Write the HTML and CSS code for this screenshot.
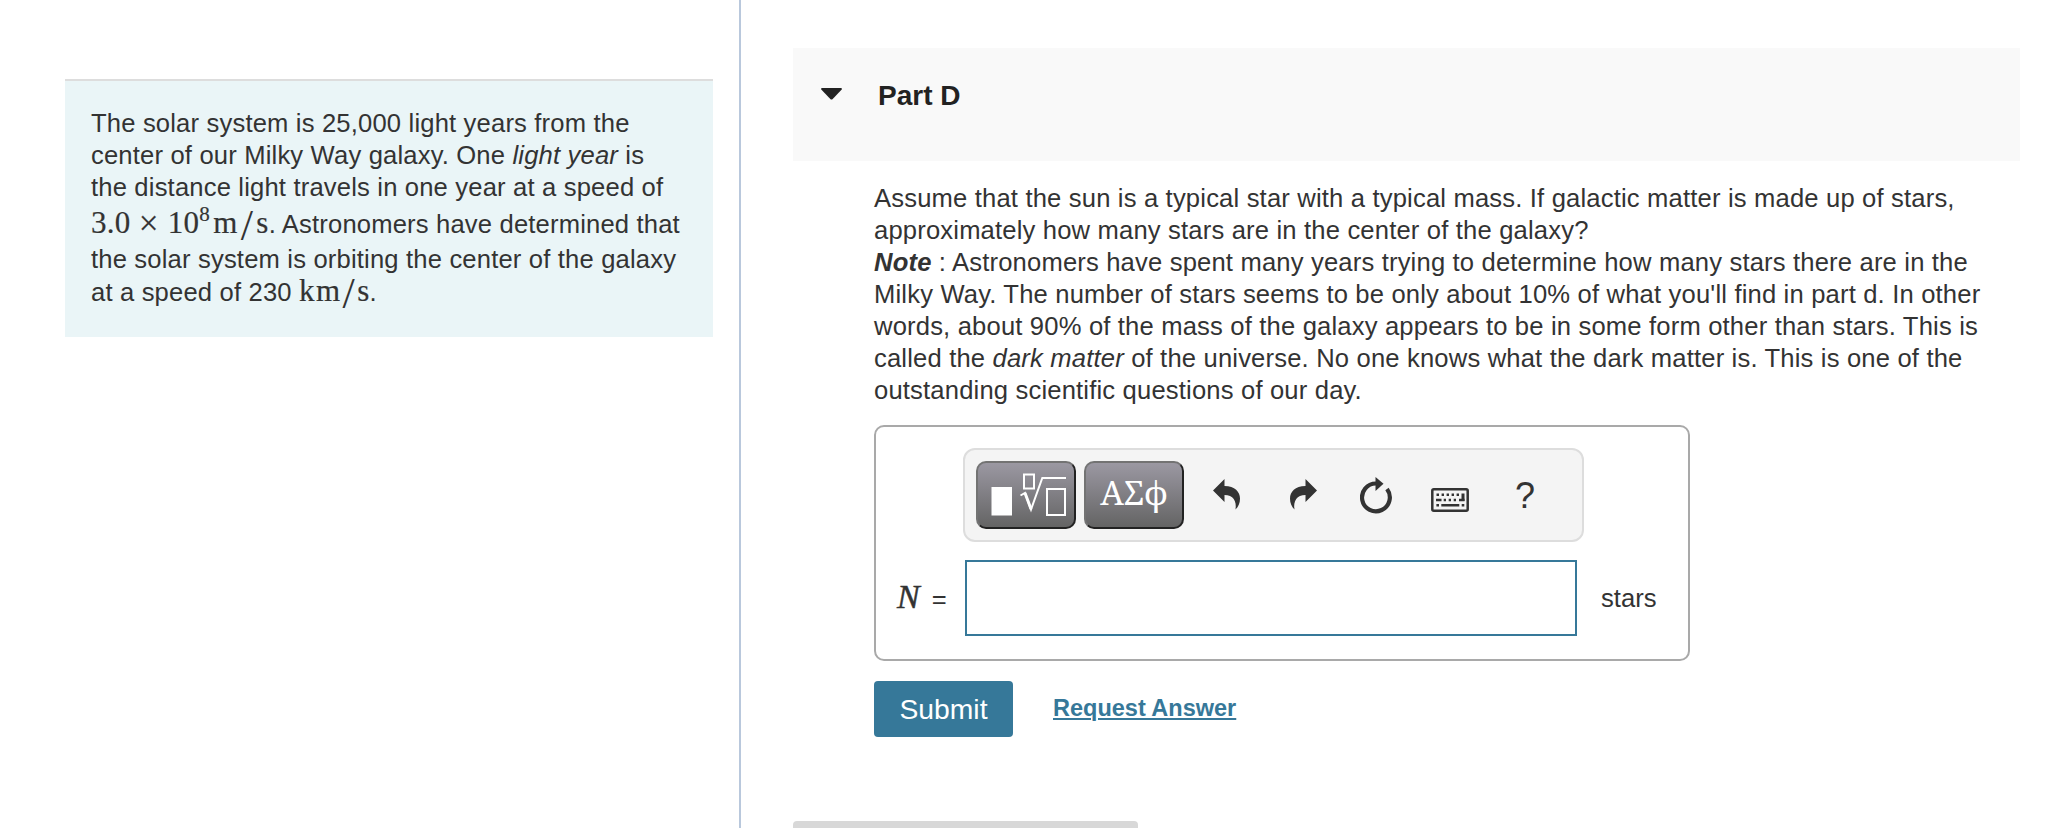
FILE: index.html
```
<!DOCTYPE html>
<html lang="en">
<head>
    <meta charset="UTF-8">
    <meta name="viewport" content="width=device-width, initial-scale=1.0">
    <title>Part D</title>
    <link rel="stylesheet" href="styles.css">
</head>
<body>

<!-- Left column: problem introduction -->
<aside class="intro-column">
    <div class="intro">
        <span class="line">The solar system is 25,000 light years from the</span>
        <span class="line">center of our Milky Way galaxy. One <em>light year</em> is</span>
        <span class="line">the distance light travels in one year at a speed of</span>
        <span class="line line-power"><span class="math">3.0<span class="times">×</span>10<span class="sup">8</span><span class="wide">m</span><span class="slash">/</span>s</span>. Astronomers have determined that</span>
        <span class="line line-after">the solar system is orbiting the center of the galaxy</span>
        <span class="line">at a speed of 230 <span class="math"><span class="wide">km</span><span class="slash">/</span>s</span>.</span>
    </div>
</aside>

<!-- Right column: the question -->
<main class="question-column">
    <header class="part-header">
        <svg class="caret" width="21" height="12" viewBox="0 0 21 12">
            <path d="M1 0h19q1.500 .5.5 1.800L11.700 11q-1.200 1-2.400 0L.5 1.800Q-.5.5 1 0z" fill="#222"/>
        </svg>
        <h1>Part D</h1>
    </header>

    <section class="part-body">
        <div class="question">
            <span class="line">Assume that the sun is a typical star with a typical mass. If galactic matter is made up of stars,</span>
            <span class="line">approximately how many stars are in the center of the galaxy?</span>
            <span class="line"><strong><em>Note</em></strong> : Astronomers have spent many years trying to determine how many stars there are in the</span>
            <span class="line">Milky Way. The number of stars seems to be only about 10% of what you'll find in part d. In other</span>
            <span class="line">words, about 90% of the mass of the galaxy appears to be in some form other than stars. This is</span>
            <span class="line">called the <em>dark matter</em> of the universe. No one knows what the dark matter is. This is one of the</span>
            <span class="line">outstanding scientific questions of our day.</span>
        </div>

        <div class="answer-box">
            <div class="toolbar">
                <button class="tool-button">
                    <svg width="96" height="64" viewBox="0 0 96 64" fill="none" stroke="#fff" stroke-width="2">
                        <rect x="13.500" y="24" width="20.500" height="28.500" fill="#fff" stroke="none"/>
                        <rect x="46" y="11.500" width="10" height="14"/>
                        <path d="M42.500 32.500l4.500-2.500 6 16.500L64.300 15H88"/>
                        <path d="M47 30l6 16" stroke-width="3"/>
                        <rect x="69" y="26" width="18" height="26"/>
                    </svg>
                </button>
                <button class="tool-button greek">ΑΣϕ</button>
                <button class="icon-button undo">
                    <svg width="28" height="31" viewBox="0 0 28 31"><path d="M0 11.500L11.500 0v7C22 7 27 13 27 19.500c0 4.500-1.500 8-4.500 11C24 22 20 16 11.500 16v7z" fill="#333"/></svg>
                </button>
                <button class="icon-button redo">
                    <svg width="28" height="31" viewBox="0 0 28 31"><path d="M27 11.500L15.500 0v7C5 7 0 13 0 19.500c0 4.500 1.500 8 4.500 11C3 22 7 16 15.500 16v7z" fill="#333"/></svg>
                </button>
                <button class="icon-button reset">
                    <svg width="32" height="37" viewBox="0 0 32 37"><path d="M16 6.500A13.900 13.900 0 1 0 27 12" fill="none" stroke="#333" stroke-width="4.200"/><path d="M15.500 0l8 6.800-8 7.200z" fill="#333"/></svg>
                </button>
                <button class="icon-button keyboard">
                    <svg width="38" height="24" viewBox="0 0 38 24" fill="none" stroke="#333" stroke-width="2.500">
                        <rect x="1.300" y="1.300" width="35.400" height="21.400" rx="1.500"/>
                        <path d="M5.500 6.700H8m2.600 0H13m2.600 0H18m2.600 0H23m2.600 0H28M5 12h5.500m2.200 0H15m2.700 0H20m2.700 0H25m3 0h5.500M5.400 17.200H8m2.300 0h18m2.400 0h2.600"/>
                        <path d="M32 5.500V13" stroke-width="3"/>
                    </svg>
                </button>
                <button class="icon-button help">?</button>
            </div>
            <div class="answer-row">
                <label for="answer"><i>N</i>=</label>
                <input id="answer" type="text">
                <span class="unit">stars</span>
            </div>
        </div>

        <div class="actions">
            <button class="submit">Submit</button>
            <a class="request" href="#">Request Answer</a>
        </div>
    </section>

    <div class="next-bar"></div>
</main>

</body>
</html>
```
FILE: styles.css
```
* {
    box-sizing: border-box;
}

body {
    margin: 0;
    height: 828px;
    overflow: hidden;
    display: flex;
    background-color: #fff;
    color: #333;
    font-family: "Liberation Sans", Arial, sans-serif;
    font-size: 25.6px;
    line-height: 32px;
}

/* Left column */
.intro-column {
    width: 741px;
    padding: 79px 26px 0 65px;
    border-right: 2px solid #b9c8dc;
}

.intro {
    height: 258px;
    padding: 26px 0 0 26px;
    border-top: 2px solid #ddd;
    background-color: #eaf5f7;
}

.line {
    display: block;
    height: 32px;
    letter-spacing: 0.17px;
    white-space: nowrap;
}

.line-power {
    height: 38px;
    line-height: 43px;
}

.line-after {
    height: 35px;
    line-height: 37px;
}

/* Formulas */
.math {
    font-family: "Liberation Serif", "Times New Roman", serif;
    font-size: 31px;
    line-height: 0;
    letter-spacing: 0.3px;
    -webkit-text-stroke: 0.2px #333;
}

.times {
    margin: 0 9px 0 8px;
    font-size: 35px;
    position: relative;
    top: 2px;
}

.sup {
    margin-right: 3px;
    font-size: 21px;
    position: relative;
    top: -12px;
}

.wide {
    letter-spacing: 1.5px;
}

.slash {
    margin: 0 2px 0 1px;
    font-size: 44px;
    position: relative;
    top: 7px;
    -webkit-text-stroke: 0;
}

.line-power .slash {
    margin: 0 3px 0 2px;
}

/* Right column */
.question-column {
    flex: 1;
    padding: 48px 50px 0 52px;
}

.part-header {
    display: flex;
    height: 113px;
    padding: 31px 28px;
    background-color: #f9f9f9;
}

.caret {
    margin-top: 9px;
}

.part-header h1 {
    margin: 1px 0 0 36px;
    color: #222;
    font-size: 28px;
    line-height: 32px;
}

.part-body {
    padding: 21px 0 0 81px;
}

.question {
    height: 243px;
}

.answer-box {
    width: 816px;
    height: 236px;
    padding: 21px 0 0 21px;
    border: 2px solid #a9a9a9;
    border-radius: 10px;
}

.toolbar {
    display: flex;
    width: 621px;
    height: 94px;
    margin-left: 66px;
    padding: 11px;
    border: 2px solid #ddd;
    border-radius: 12px;
    background-color: #f4f4f4;
}

.tool-button {
    width: 100px;
    height: 68px;
    margin-right: 8px;
    padding: 0;
    border: 2px solid;
    border-color: #737373 #222 #222 #737373;
    border-radius: 10px;
    background: linear-gradient(#9b98a2, #646464);
    color: #fff;
}

.tool-button svg {
    display: block;
}

.greek {
    padding-bottom: 7px;
    font-family: "Noto Serif", "DejaVu Serif", serif;
    font-size: 33.5px;
}

.icon-button {
    padding: 0;
    border: 0;
    background: none;
    color: #333;
    align-self: flex-start;
}

.icon-button svg {
    display: block;
}

.undo {
    margin: 18px 0 0 21px;
}

.redo {
    margin: 18px 0 0 49px;
}

.reset {
    margin: 16px 0 0 42px;
}

.keyboard {
    margin: 27px 0 0 39px;
}

.help {
    margin: 15px 0 0 46px;
    font-family: "Liberation Sans", Arial, sans-serif;
    font-size: 36px;
    line-height: 40px;
}

.answer-row {
    display: flex;
    align-items: center;
    margin-top: 18px;
}

.answer-row label {
    width: 68px;
}

.answer-row i {
    margin-right: 12px;
    font-family: "Liberation Serif", serif;
    font-size: 34px;
    -webkit-text-stroke: 0.5px #333;
}

.answer-row input {
    width: 612px;
    height: 76px;
    border: 2px solid #367899;
    background-color: #fff;
}

.unit {
    margin-left: 24px;
}

.actions {
    display: flex;
    align-items: center;
    height: 56px;
    margin-top: 20px;
}

.submit {
    width: 139px;
    height: 56px;
    padding: 0;
    border: 0;
    border-radius: 4px;
    background-color: #367899;
    color: #fff;
    font-family: "Liberation Sans", Arial, sans-serif;
    font-size: 28.3px;
}

.request {
    margin: 0 0 2px 40px;
    color: #367899;
    font-size: 23.5px;
    font-weight: bold;
    text-decoration-thickness: 2px;
    text-underline-offset: 2px;
}

/* Top of the next block, cut by the window */
.next-bar {
    width: 345px;
    height: 40px;
    margin-top: 84px;
    border-radius: 4px;
    background-color: #d8d8d8;
}
```
